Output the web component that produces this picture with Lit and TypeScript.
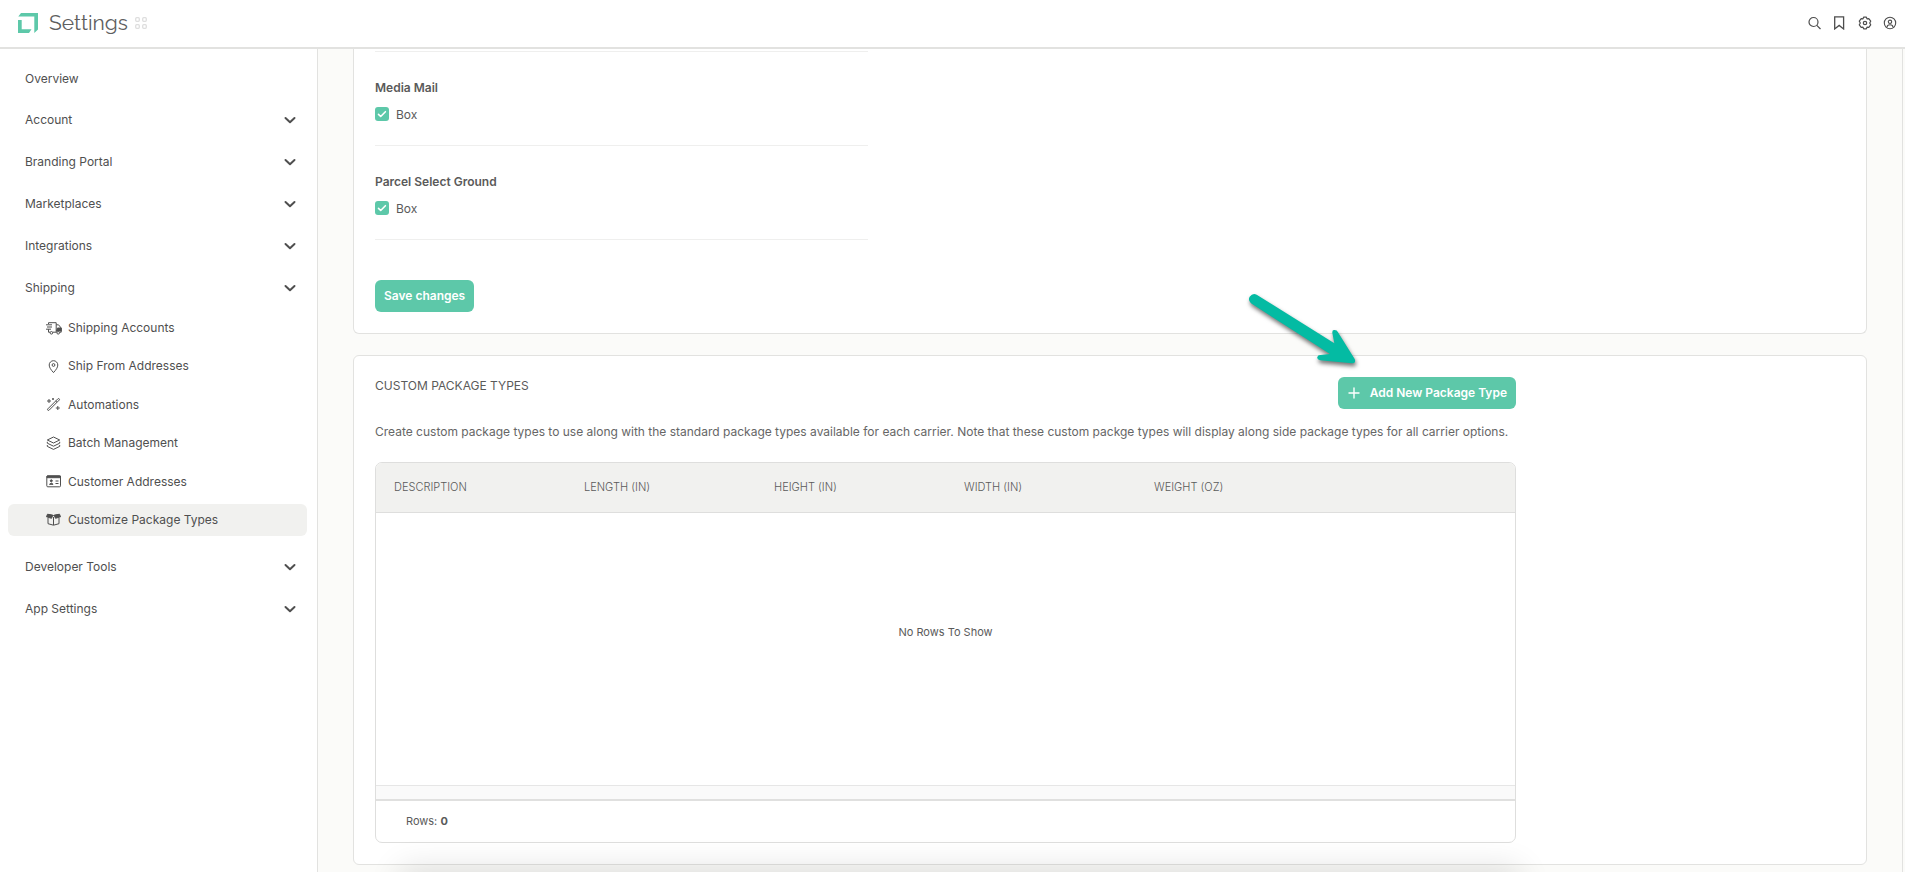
import { LitElement, html, css, svg, nothing } from "lit";
import { customElement, property } from "lit/decorators.js";

const icons: Record<string, unknown> = {
  truck: svg`<path d="M3.500 4V2.700h7.700v9.500M11.200 4.800h2.300l2.700 3.200v4.200h-1.500M3.500 9.200v3h1.500M7.900 12.200h3.800M1 4.800h6M2 7h5M1 9.200h5"/><path d="M12.500 8h3.700v3h-4.700z" fill="currentColor"/><circle cx="6.400" cy="12.800" r="1.300"/><circle cx="13.200" cy="12.800" r="1.300" fill="#fff"/>`,
  pin: svg`<path d="M8.500 14.600C6 11.800 4.200 9.500 4.200 7a4.300 4.300 0 0 1 8.600 0c0 2.500-1.800 4.800-4.300 7.600z"/><circle cx="8.500" cy="7" r="1.400"/>`,
  wand: svg`<path d="M2.800 12.900 12.900 2.800q.700-.500 1.300 0t0 1.300L4.100 14.200q-.700.500-1.300 0t0-1.300zM10.700 5l1.300 1.300"/><path d="M4 3v4M2 5h4M12.800 10v4M10.800 12h4M8 2v2M7 3h2"/>`,
  layers: svg`<path d="M8.500 2 14.700 5 8.500 8 2.300 5zM2.300 6.800v1.400l6.200 3 6.200-3V6.800M2.300 10v1.400l6.200 3 6.200-3V10" stroke-linejoin="round"/>`,
  card: svg`<rect x="1.800" y="2.800" width="13.700" height="11" rx="1"/><path d="M2 3h13.500v1.700H2z" fill="currentColor"/><circle cx="6.300" cy="7.800" r="1" fill="currentColor"/><path d="M4.500 11.300q1.800-2.200 3.600 0z" fill="currentColor"/><path d="M10.500 8h3M10.500 10.500h3"/>`,
  box: svg`<path d="M3 7v5.700l5.500 1.500 5.500-1.500V7M8.500 6v8M3 3.500l5.500 1 5.500-1"/><path d="M2.500 3.200 7.800 4.300 6.500 7.300 1.500 5.800zM14.500 3.200 9.200 4.300l1.300 3 5-1.500z" fill="currentColor"/>`,
};

interface NavItem {
  label: string;
  icon: string;
  active?: boolean;
}
interface NavGroup {
  label: string;
  items?: NavItem[];
}

const groups: NavGroup[] = [
  { label: "Account" },
  { label: "Branding Portal" },
  { label: "Marketplaces" },
  { label: "Integrations" },
  {
    label: "Shipping",
    items: [
      { label: "Shipping Accounts", icon: "truck" },
      { label: "Ship From Addresses", icon: "pin" },
      { label: "Automations", icon: "wand" },
      { label: "Batch Management", icon: "layers" },
      { label: "Customer Addresses", icon: "card" },
      { label: "Customize Package Types", icon: "box", active: true },
    ],
  },
  { label: "Developer Tools" },
  { label: "App Settings" },
];

const base = css`
  * {
    box-sizing: border-box;
  }
  button {
    font: inherit;
    color: inherit;
    border: 0;
    padding: 0;
    background: none;
    cursor: pointer;
  }
  svg {
    display: block;
    fill: none;
    stroke: currentColor;
  }
`;

@customElement("top-bar")
class TopBar extends LitElement {
  static styles = [
    base,
    css`
      :host {
        display: flex;
        align-items: center;
        height: 49px;
        padding: 0 8px 2px 18px;
        background: #fff;
        border-bottom: 2px solid #e2e2e0;
        color: #4d4d4d;
      }
      .title {
        margin: 0 7px 0 11px;
        font: 400 21px/28px Raleway, Lato, sans-serif;
        color: #5f5f5f;
      }
      .apps {
        color: #dedede;
      }
      .actions {
        display: flex;
        gap: 11px;
        margin-left: auto;
      }
    `,
  ];
  render() {
    return html`
      <svg width="20" height="20" viewBox="0 0 20 20" aria-hidden="true">
        <g fill="#5dc8a9" stroke="none">
          <path d="M3 0h17v16.500L16.300 20V3.500H.300z" />
          <path d="M0 7h3.700v9.300h9.800L11 20H0z" />
        </g>
      </svg>
      <div class="title">Settings</div>
      <button class="apps" aria-label="Apps">
        <svg width="12" height="12" viewBox="0 0 12 12" stroke-width="1.3">
          <rect x=".7" y=".7" width="3.600" height="3.600" rx="1" />
          <rect x="7.700" y=".7" width="3.600" height="3.600" rx="1" />
          <rect x=".7" y="7.700" width="3.600" height="3.600" rx="1" />
          <rect x="7.700" y="7.700" width="3.600" height="3.600" rx="1" />
        </svg>
      </button>
      <div class="actions">
        <button aria-label="Search">
          <svg width="14" height="14" viewBox="0 0 14 14" stroke-width="1.2">
            <circle cx="5.500" cy="6" r="4.500" /><path d="M8.800 9.300 12.500 13" />
          </svg>
        </button>
        <button aria-label="Bookmarks">
          <svg width="14" height="14" viewBox="0 0 14 14" stroke-width="1.3">
            <path d="M1.700.900h8.900v12L6.150 9.400l-4.450 3.500z" />
          </svg>
        </button>
        <button aria-label="Settings">
          <svg width="14" height="14" viewBox="0 0 14 14" stroke-width="1.200" stroke-linejoin="round">
            <path d="M5.600 1.200h2.800l.6 1.700 1.800-.2 1.900 2.500-1 1.800 1 1.800-1.900 2.500-1.800-.2-.6 1.700H5.600L5 11.100l-1.800.2-1.900-2.500 1-1.800-1-1.800 1.900-2.500 1.800.2z" />
            <circle cx="7" cy="7" r="1.700" />
          </svg>
        </button>
        <button aria-label="Profile">
          <svg width="14" height="14" viewBox="0 0 14 14" stroke-width="1.100">
            <circle cx="7" cy="7" r="5.700" />
            <circle cx="7" cy="5.800" r="1.700" />
            <path d="M4 11.300q0-2.600 3-2.600t3 2.600" />
          </svg>
        </button>
      </div>
    `;
  }
}

@customElement("side-nav")
class SideNav extends LitElement {
  static styles = [
    base,
    css`
      :host {
        flex: none;
        width: 318px;
        padding: 10px 10px 0 8px;
        background: #fff;
        border-right: 1px solid #e2e2e0;
        color: #4f4f4f;
      }
      a {
        color: inherit;
        text-decoration: none;
      }
      .overview,
      .group {
        display: flex;
        align-items: center;
        width: 100%;
        height: 42px;
        padding: 0 11px 0 17px;
      }
      .overview {
        height: 40px;
      }
      .group {
        justify-content: space-between;
      }
      .items {
        display: flex;
        flex-direction: column;
        justify-content: space-between;
        height: 224px;
        margin: 3px 0 10px;
      }
      .item {
        display: flex;
        align-items: center;
        gap: 6px;
        height: 32px;
        padding-left: 37px;
        border-radius: 6px;
      }
      .item.active {
        background: #f1f1ef;
      }
    `,
  ];
  render() {
    return html`
      <nav>
        <a class="overview" href="#overview">Overview</a>
        ${groups.map(
          (g) => html`
            <button class="group" aria-expanded=${g.items ? "true" : "false"}>
              <span>${g.label}</span>
              <svg width="12" height="8" viewBox="0 0 12 8" stroke-width="2" stroke-linecap="round" stroke-linejoin="round">
                <path d="M1.500 2 6 6.200 10.500 2" />
              </svg>
            </button>
            ${g.items
              ? html`<div class="items">
                  ${g.items.map(
                    (i) => html`<a class="item ${i.active ? "active" : ""}" href="#">
                      <svg width="17" height="17" viewBox="0 0 17 17" stroke-width="1">${icons[i.icon]}</svg>
                      ${i.label}
                    </a>`
                  )}
                </div>`
              : nothing}
          `
        )}
      </nav>
    `;
  }
}

@customElement("carrier-option")
class CarrierOption extends LitElement {
  @property() name = "";
  static styles = [
    base,
    css`
      :host {
        display: block;
        max-width: 493px;
        padding: 26px 0 20px;
        border-bottom: 1px solid #efefee;
      }
      .name {
        margin: 0 0 6px;
        font-size: 12px;
        font-weight: 600;
        line-height: 20px;
      }
      label {
        display: flex;
        align-items: center;
        gap: 7px;
        height: 21px;
      }
      input {
        appearance: none;
        width: 14px;
        height: 14px;
        margin: 0 0 1px;
        border-radius: 3px;
        background: #5dc8a9
          url("data:image/svg+xml,%3Csvg xmlns='http://www.w3.org/2000/svg' viewBox='0 0 14 14' fill='none' stroke='white' stroke-width='1.6' stroke-linecap='round' stroke-linejoin='round'%3E%3Cpath d='M3.500 7.400 5.700 9.500 10.400 4.700'/%3E%3C/svg%3E");
      }
    `,
  ];
  render() {
    return html`
      <h3 class="name">${this.name}</h3>
      <label><input type="checkbox" checked />Box</label>
    `;
  }
}

@customElement("app-root")
class AppRoot extends LitElement {
  static styles = [
    base,
    css`
      :host {
        display: flex;
        flex-direction: column;
        height: 100vh;
        overflow: hidden;
        position: relative;
        font-family: Inter, sans-serif;
        font-size: 12px;
        line-height: 20px;
        color: #5a5a5a;
        background: #fbfbf9;
      }
      .body {
        display: flex;
        flex: 1;
        min-height: 0;
      }
      main {
        flex: 1;
        min-width: 0;
        margin-right: 2px;
        padding: 0 35px;
        border-right: 1px solid #e2e2e0;
        overflow: hidden;
      }
      .card {
        padding: 21px;
        background: #fff;
        border: 1px solid #e2e2e0;
        border-radius: 6px;
      }
      .card.scrolled {
        margin-bottom: 21px;
        padding-top: 2px;
        border-top: 0;
        border-radius: 0 0 6px 6px;
      }
      .rule {
        max-width: 493px;
        height: 1px;
        margin: 0;
        border: 0;
        background: #efefee;
      }
      .primary {
        display: flex;
        align-items: center;
        height: 32px;
        padding: 0 9px;
        border-radius: 6px;
        background: #5dc8a9;
        color: #fff;
        font-weight: 600;
      }
      .save {
        margin-top: 40px;
      }
      .types {
        width: 1141px;
        max-width: 100%;
      }
      .head {
        display: flex;
        justify-content: space-between;
        align-items: flex-start;
      }
      h2 {
        margin: 0;
        font-size: 12px;
        font-weight: 400;
        line-height: 18px;
      }
      .add-wrap {
        position: relative;
      }
      .add {
        gap: 9px;
      }
      .arrow {
        position: absolute;
        left: -98px;
        top: -87px;
        overflow: visible;
        filter: drop-shadow(1px 3px 2px rgba(0, 0, 0, 0.55));
        pointer-events: none;
      }
      p {
        margin: 13px 0 20px;
        color: #666;
      }
      .grid {
        border: 1px solid #dededd;
        border-radius: 7px;
        overflow: hidden;
        font-size: 11px;
      }
      table {
        width: 100%;
        table-layout: fixed;
        border-collapse: collapse;
      }
      th {
        width: 190px;
        height: 49px;
        padding: 0 18px 1px;
        background: #f1f1ef;
        border-bottom: 1px solid #dededd;
        font-weight: 300;
        text-align: left;
        text-transform: uppercase;
      }
      th.rest {
        width: auto;
      }
      td {
        height: 273px;
        padding: 0 0 33px;
        text-align: center;
      }
      .scroll-track {
        height: 16px;
        background: #fafafa;
        border-top: 1px solid #e6e6e6;
        border-bottom: 2px solid #e0e0df;
      }
      .status {
        height: 41px;
        padding: 10px 30px;
      }
      .sheet-shadow {
        position: absolute;
        left: 400px;
        right: 385px;
        top: 100%;
        height: 60px;
        box-shadow: 0 -4px 32px rgba(0, 0, 0, 0.12);
      }
    `,
  ];
  render() {
    return html`
      <top-bar></top-bar>
      <div class="body">
        <side-nav></side-nav>
        <main>
          <section class="card scrolled">
            <hr class="rule" />
            <carrier-option name="Media Mail"></carrier-option>
            <carrier-option name="Parcel Select Ground"></carrier-option>
            <button class="primary save">Save changes</button>
          </section>
          <section class="card">
            <div class="types">
              <div class="head">
                <h2>CUSTOM PACKAGE TYPES</h2>
                <div class="add-wrap">
                  <button class="primary add">
                    <svg width="14" height="14" viewBox="0 0 14 14" stroke-width="1.400" stroke-linecap="round">
                      <path d="M7 2v10M2 7h10" />
                    </svg>
                    Add New Package Type
                  </button>
                  <svg class="arrow" width="120" height="80" viewBox="0 0 360 240" aria-hidden="true">
                    <path
                      fill="#04bba3"
                      stroke="none"
                      d="M50 14 283 160 277 129Q276 118 284 120 291 120 294 127L344 207Q349 219 336 220L240 211Q230 208 232 201 234 194 242 195L270 192 33 40Q23 31 29 20 38 8 50 14Z"
                    />
                  </svg>
                </div>
              </div>
              <p>
                Create custom package types to use along with the standard package types available for each carrier. Note that these custom packge types will display along side package types for all carrier options.
              </p>
              <div class="grid">
                <table>
                  <thead>
                    <tr>
                      <th>Description</th>
                      <th>Length (in)</th>
                      <th>Height (in)</th>
                      <th>Width (in)</th>
                      <th>Weight (oz)</th>
                      <th class="rest"></th>
                    </tr>
                  </thead>
                  <tbody>
                    <tr>
                      <td colspan="6">No Rows To Show</td>
                    </tr>
                  </tbody>
                </table>
                <div class="scroll-track"></div>
                <div class="status">Rows: <b>0</b></div>
              </div>
            </div>
          </section>
        </main>
      </div>
      <div class="sheet-shadow"></div>
    `;
  }
}
